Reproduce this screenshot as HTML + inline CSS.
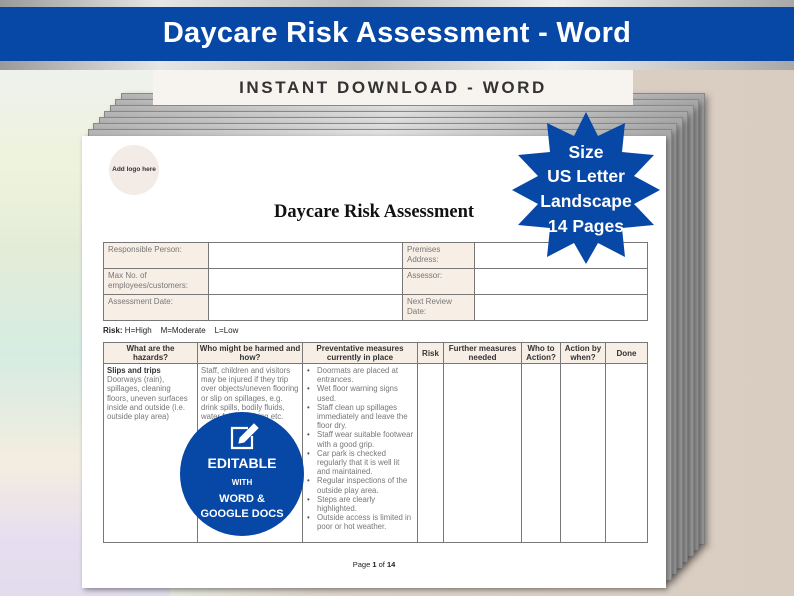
<!DOCTYPE html>
<html><head><meta charset="utf-8">
<style>
*{margin:0;padding:0;box-sizing:border-box}
body{width:794px;height:596px;overflow:hidden;position:relative;font-family:"Liberation Sans",sans-serif;
background:linear-gradient(90deg,#eef3ea 0%,#e9efe6 12%,#dcd3c9 40%,#d9ccc0 100%);}
.lbg{position:absolute;left:0;top:60px;width:170px;height:536px;
background:linear-gradient(180deg,#eef2ee 0%,#eef3dc 20%,#e4ecd8 35%,#d6ece2 55%,#f3ede0 75%,#e6def0 90%,#e2dced 100%);}
.silver{position:absolute;left:0;width:794px;background:linear-gradient(90deg,#9a9a9a,#e6e6e6 20%,#bdbdbd 45%,#eeeeee 70%,#a8a8a8)}
.bar{position:absolute;left:0;top:7px;width:794px;height:54px;background:#0747a6;color:#fff;font-weight:bold;font-size:29px;text-align:center;line-height:52px;letter-spacing:0.3px}
.dl{position:absolute;left:153px;top:70px;width:480px;height:35px;background:#f7f3ef;color:#333;font-weight:bold;font-size:17px;letter-spacing:2.6px;text-align:center;line-height:35px;z-index:20}
.pg{position:absolute;width:584px;height:452px;background:linear-gradient(90deg,#b5b5b5,#e0e0e0 50%,#a8a8a8);border:1px solid #888;box-shadow:3px 3px 6px rgba(0,0,0,.35)}
.main{position:absolute;left:82px;top:136px;width:584px;height:452px;background:#fff;box-shadow:2px 2px 5px rgba(0,0,0,.4);z-index:10}
.abs{position:absolute}
table{border-collapse:collapse;position:absolute;table-layout:fixed}
td,th{border:1px solid #777;vertical-align:top}
.info td{font-size:8px;color:#777;padding:2px 4px;line-height:10px}
.info td.l{background:#f7eee6}
.mt th{background:#f7eee6;font-size:8px;color:#333;font-weight:bold;text-align:center;vertical-align:middle;line-height:9px;padding:1px 1px}
.mt td{font-size:7.8px;color:#777;line-height:9.2px;padding:2px 3px}
ul{list-style:none}
li{position:relative;padding-left:11px}
li:before{content:"•";position:absolute;left:1px;color:#555}
</style></head><body>
<div class="lbg"></div>
<div class="silver" style="top:0;height:7px"></div>
<div class="bar">Daycare Risk Assessment - Word</div>
<div class="silver" style="top:61px;height:9px"></div>
<div class="dl">INSTANT DOWNLOAD - WORD</div>

<div class="pg" style="left:121px;top:93px"></div>
<div class="pg" style="left:115px;top:99px"></div>
<div class="pg" style="left:110px;top:105px"></div>
<div class="pg" style="left:104px;top:111px"></div>
<div class="pg" style="left:99px;top:117px"></div>
<div class="pg" style="left:93px;top:123px"></div>
<div class="pg" style="left:88px;top:129px"></div>

<div class="main">
  <div class="abs" style="left:27px;top:9px;width:50px;height:50px;border-radius:50%;background:#f3ebe6;font-size:6.5px;font-weight:bold;color:#333;text-align:center;line-height:50px">Add logo here</div>
  <div class="abs" style="left:0;top:66px;width:584px;text-align:center;font-family:'Liberation Serif',serif;font-weight:bold;font-size:18.5px;color:#111">Daycare Risk Assessment</div>
  <table class="info" style="left:21px;top:106px;width:545px">
    <tr style="height:26px"><td class="l" style="width:105px">Responsible Person:</td><td style="width:194px"></td><td class="l" style="width:72px">Premises Address:</td><td></td></tr>
    <tr style="height:26px"><td class="l">Max No. of employees/customers:</td><td></td><td class="l">Assessor:</td><td></td></tr>
    <tr style="height:26px"><td class="l">Assessment Date:</td><td></td><td class="l">Next Review Date:</td><td></td></tr>
  </table>
  <div class="abs" style="left:21px;top:190px;font-size:8px;color:#222"><b>Risk:</b> H=High &nbsp;&nbsp; M=Moderate &nbsp;&nbsp; L=Low</div>
  <table class="mt" style="left:21px;top:206px;width:545px">
    <tr style="height:21px"><th style="width:94px;padding:1px 12px">What are the hazards?</th><th style="width:105px">Who might be harmed and how?</th><th style="width:115px">Preventative measures currently in place</th><th style="width:26px">Risk</th><th style="width:78px">Further measures needed</th><th style="width:39px">Who to Action?</th><th style="width:45px">Action by when?</th><th>Done</th></tr>
    <tr style="height:179px"><td><b style="color:#333">Slips and trips</b><br>Doorways (rain), spillages, cleaning floors, uneven surfaces inside and outside (i.e. outside play area)</td>
    <td>Staff, children and visitors may be injured if they trip over objects/uneven flooring or slip on spillages, e.g. drink spills, bodily fluids, water from washing etc.</td>
    <td><ul><li>Doormats are placed at entrances.</li><li>Wet floor warning signs used.</li><li>Staff clean up spillages immediately and leave the floor dry.</li><li>Staff wear suitable footwear with a good grip.</li><li>Car park is checked regularly that it is well lit and maintained.</li><li>Regular inspections of the outside play area.</li><li>Steps are clearly highlighted.</li><li>Outside access is limited in poor or hot weather.</li></ul></td>
    <td></td><td></td><td></td><td></td><td></td></tr>
  </table>
  <div class="abs" style="left:0;top:424px;width:584px;text-align:center;font-size:7.5px;color:#222">Page <b>1</b> of <b>14</b></div>
</div>

<svg class="abs" style="left:508px;top:112px;z-index:15" width="156" height="152" viewBox="0 0 156 152">
<polygon fill="#0747a6" points="78,0 90,24 117,11 114,40 146,43 126,64 152,78 126,92 146,113 114,116 117,145 90,131 78,152 66,131 39,145 42,116 10,113 30,92 4,78 30,64 10,43 42,40 39,11 66,24"/>
<g fill="#fff" font-family="Liberation Sans,sans-serif" font-weight="bold" font-size="17.5" text-anchor="middle">
<text x="78" y="46">Size</text><text x="78" y="70">US Letter</text><text x="78" y="95">Landscape</text><text x="78" y="120">14 Pages</text></g>
</svg>

<svg class="abs" style="left:180px;top:412px;z-index:15" width="124" height="124" viewBox="0 0 124 124">
<circle cx="62" cy="62" r="62" fill="#0747a6"/>
<g fill="none" stroke="#fff" stroke-width="2.2"><path d="M68 16 H52 V36 H72 V24"/><path d="M74 12 L78 16 L64 30 L59 31 L60 26 Z" fill="#fff" stroke-width="1"/></g>
<g fill="#fff" font-family="Liberation Sans,sans-serif" font-weight="bold" text-anchor="middle">
<text x="62" y="56" font-size="14">EDITABLE</text><text x="62" y="73" font-size="8">WITH</text>
<text x="62" y="90" font-size="11">WORD &amp;</text><text x="62" y="105" font-size="11">GOOGLE DOCS</text></g>
</svg>
</body></html>
